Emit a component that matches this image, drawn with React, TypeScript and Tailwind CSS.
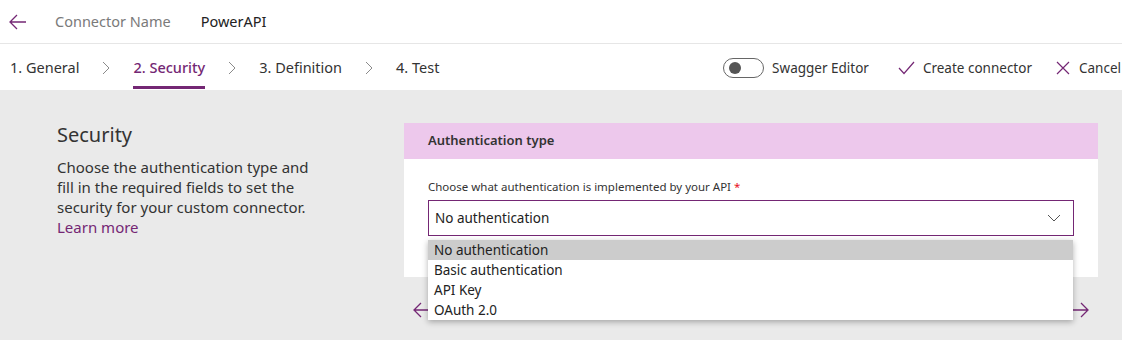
const font = { fontFamily: '"Noto Sans", "Open Sans", sans-serif' };

function Chevron() {
  return (
    <svg width="8" height="14" viewBox="0 0 8 14" className="mx-[23px]">
      <path d="M1 1 L7 7 L1 13" fill="none" stroke="#8a8a8a" strokeWidth="1" />
    </svg>
  );
}

function ArrowLeft() {
  return (
    <svg width="18" height="16" viewBox="0 0 18 16">
      <path d="M17 8 H2 M8 1 L1 8 L8 15" fill="none" stroke="#742774" strokeWidth="1.3" />
    </svg>
  );
}

function ArrowRight() {
  return (
    <svg width="18" height="16" viewBox="0 0 18 16">
      <path d="M1 8 H16 M10 1 L17 8 L10 15" fill="none" stroke="#742774" strokeWidth="1.3" />
    </svg>
  );
}

const options = ["No authentication", "Basic authentication", "API Key", "OAuth 2.0"];

export default function App() {
  return (
    <div className="w-[1122px] h-[340px] flex flex-col bg-white overflow-hidden text-[#333]" style={font}>
      {/* Header */}
      <div className="h-[44px] flex items-center border-b border-[#e6e6e6] shrink-0">
        <div className="pl-[9px] w-[55px]">
          <ArrowLeft />
        </div>
        <span className="text-[14.5px] text-[#7a7a7a]">Connector Name</span>
        <span className="text-[14.5px] text-[#222] ml-[30px]">PowerAPI</span>
      </div>

      {/* Steps */}
      <div className="h-[46px] flex items-stretch shrink-0 pt-[2px]">
        <div className="flex items-center pl-[10px] text-[14.5px] text-[#333]">
          <span>1. General</span>
          <Chevron />
          <span className="relative h-full flex items-center text-[#742774] font-medium">
            2. Security
            <span className="absolute left-0 right-0 bottom-[1px] h-[3px] bg-[#742774]" />
          </span>
          <Chevron />
          <span>3. Definition</span>
          <Chevron />
          <span>4. Test</span>
        </div>
        <div className="ml-auto flex items-center text-[13.5px] text-[#333]">
          <div className="w-[41px] h-[20px] rounded-full border border-[#666] flex items-center pl-[5px] mr-[8px]">
            <div className="w-[12px] h-[12px] rounded-full bg-[#555]" />
          </div>
          <span>Swagger Editor</span>
          <svg width="17" height="14" viewBox="0 0 17 14" className="ml-[29px] mr-[8px]">
            <path d="M1 7 L6 12.5 L16 1" fill="none" stroke="#742774" strokeWidth="1.2" />
          </svg>
          <span>Create connector</span>
          <svg width="14" height="14" viewBox="0 0 14 14" className="ml-[24px] mr-[9px]">
            <path d="M1 1 L13 13 M13 1 L1 13" fill="none" stroke="#742774" strokeWidth="1.2" />
          </svg>
          <span className="whitespace-nowrap w-[43px] overflow-hidden">Cancel</span>
        </div>
      </div>

      {/* Body */}
      <div className="flex-1 bg-[#eaeaea] flex pt-[33px]">
        <div className="w-[404px] pl-[57px]">
          <h2 className="text-[20px] leading-[24px] text-[#333]">Security</h2>
          <p className="w-[252px] text-[15px] leading-[20px] text-[#333] mt-[10px]">
            Choose the authentication type and fill in the required fields to set the security for your custom connector.
            <span className="block text-[#742774]">Learn more</span>
          </p>
        </div>
        <div className="w-[694px] flex flex-col">
          <div className="bg-white">
            <div className="h-[36px] bg-[#edc8ec] flex items-center pl-[24px] text-[13px] font-semibold text-[#333]">
              Authentication type
            </div>
            <div className="px-[24px] pt-[20px] pb-[41px]">
              <div className="text-[11.5px] leading-[16px] text-[#333]">
                Choose what authentication is implemented by your API <span className="text-[#e81123]">*</span>
              </div>
              <div className="relative mt-[5px]">
                <div className="h-[36px] border border-[#742774] flex items-center pl-[6px] pr-[12px] text-[13.5px] text-[#222] bg-white">
                  <span>No authentication</span>
                  <svg width="14" height="8" viewBox="0 0 14 8" className="ml-auto">
                    <path d="M1 1 L7 7 L13 1" fill="none" stroke="#555" strokeWidth="1" />
                  </svg>
                </div>
                <div className="absolute left-0 right-[1px] top-[40px] bg-white shadow-[0_2px_6px_rgba(0,0,0,0.3)] z-10">
                  {options.map((o, i) => (
                    <div
                      key={o}
                      className={`h-[20px] flex items-center pl-[6px] text-[13.5px] text-[#222] ${i === 0 ? "bg-[#cccccc]" : ""}`}
                    >
                      {o}
                    </div>
                  ))}
                </div>
              </div>
            </div>
          </div>
          <div className="flex justify-between px-[9px] mt-[25px]">
            <ArrowLeft />
            <ArrowRight />
          </div>
        </div>
      </div>
    </div>
  );
}
